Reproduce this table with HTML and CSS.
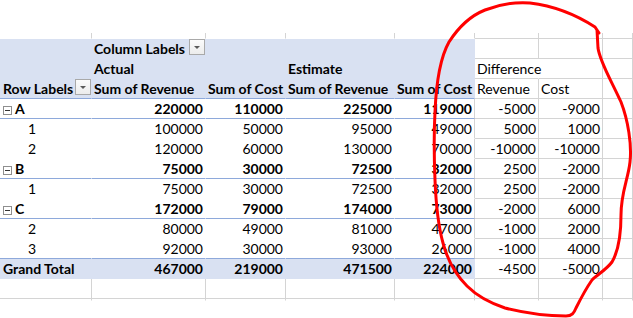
FILE: index.html
```html
<!DOCTYPE html>
<html>
<head>
<meta charset="utf-8">
<link rel="stylesheet" href="styles.css">
</head>
<body>
<div class="sheet">
  <div class="top-space"></div>
  <div class="row stub">
    <div class="c gv"></div><div class="c gv"></div><div class="c gv"></div><div class="c gv"></div><div class="c gv"></div><div class="c g"></div><div class="c g"></div><div class="c g"></div>
  </div>

  <div class="row">
    <div class="c h"></div>
    <div class="c h b btn-cell">Column Labels<span class="dd"></span></div>
    <div class="c h"></div><div class="c h"></div><div class="c h"></div>
    <div class="c g"></div><div class="c g"></div><div class="c g"></div>
  </div>
  <div class="row">
    <div class="c h"></div>
    <div class="c h b">Actual</div>
    <div class="c h"></div>
    <div class="c h b">Estimate</div>
    <div class="c h"></div>
    <div class="c g nr">Difference</div><div class="c g"></div><div class="c g"></div>
  </div>
  <div class="row">
    <div class="c h bl b btn-cell first">Row Labels<span class="dd"></span></div>
    <div class="c h bl b">Sum of Revenue</div>
    <div class="c h bl b">Sum of Cost</div>
    <div class="c h bl b">Sum of Revenue</div>
    <div class="c h bl b">Sum of Cost</div>
    <div class="c g">Revenue</div><div class="c g">Cost</div><div class="c g"></div>
  </div>

  <div class="row">
    <div class="c bl b first"><span class="tog"></span>A</div>
    <div class="c bl b n">220000</div><div class="c bl b n">110000</div><div class="c bl b n">225000</div><div class="c bl b n pe">119000</div>
    <div class="c g n">-5000</div><div class="c g n">-9000</div><div class="c g"></div>
  </div>
  <div class="row">
    <div class="c sub">1</div>
    <div class="c n">100000</div><div class="c n">50000</div><div class="c n">95000</div><div class="c n pe">49000</div>
    <div class="c g n">5000</div><div class="c g n">1000</div><div class="c g"></div>
  </div>
  <div class="row">
    <div class="c sub">2</div>
    <div class="c n">120000</div><div class="c n">60000</div><div class="c n">130000</div><div class="c n pe">70000</div>
    <div class="c g n">-10000</div><div class="c g n">-10000</div><div class="c g"></div>
  </div>
  <div class="row">
    <div class="c bl b first"><span class="tog"></span>B</div>
    <div class="c bl b n">75000</div><div class="c bl b n">30000</div><div class="c bl b n">72500</div><div class="c bl b n pe">32000</div>
    <div class="c g n">2500</div><div class="c g n">-2000</div><div class="c g"></div>
  </div>
  <div class="row">
    <div class="c sub">1</div>
    <div class="c n">75000</div><div class="c n">30000</div><div class="c n">72500</div><div class="c n pe">32000</div>
    <div class="c g n">2500</div><div class="c g n">-2000</div><div class="c g"></div>
  </div>
  <div class="row">
    <div class="c bl b first"><span class="tog"></span>C</div>
    <div class="c bl b n">172000</div><div class="c bl b n">79000</div><div class="c bl b n">174000</div><div class="c bl b n pe">73000</div>
    <div class="c g n">-2000</div><div class="c g n">6000</div><div class="c g"></div>
  </div>
  <div class="row">
    <div class="c sub">2</div>
    <div class="c n">80000</div><div class="c n">49000</div><div class="c n">81000</div><div class="c n pe">47000</div>
    <div class="c g n">-1000</div><div class="c g n">2000</div><div class="c g"></div>
  </div>
  <div class="row">
    <div class="c sub bl">3</div>
    <div class="c bl n">92000</div><div class="c bl n">30000</div><div class="c bl n">93000</div><div class="c bl n pe">26000</div>
    <div class="c g n">-1000</div><div class="c g n">4000</div><div class="c g"></div>
  </div>
  <div class="row">
    <div class="c h b first">Grand Total</div>
    <div class="c h b n">467000</div><div class="c h b n">219000</div><div class="c h b n">471500</div><div class="c h b n pe">224000</div>
    <div class="c g n">-4500</div><div class="c g n">-5000</div><div class="c g"></div>
  </div>
  <div class="row">
    <div class="c g"></div><div class="c g"></div><div class="c g"></div><div class="c g"></div><div class="c g"></div><div class="c g"></div><div class="c g"></div><div class="c g"></div>
  </div>
  <div class="row stub-bottom">
    <div class="c gv"></div><div class="c gv"></div><div class="c gv"></div><div class="c gv"></div><div class="c gv"></div><div class="c gv"></div><div class="c gv"></div><div class="c gv"></div>
  </div>
</div>

<svg class="ink" width="633" height="318" viewBox="0 0 633 318">
  <path d="M 435 112 C 436 88, 440 58, 449 42 C 458 28, 470 16, 485 10 C 500 4, 515 2, 530 3 C 555 6, 578 16, 595 27 L 599 33 L 597 30 L 598 48 C 600 62, 610 78, 621 102 C 628 120, 632 145, 630 162 C 628 180, 621 192, 621 215 C 621 235, 619 250, 612 262 C 606 270, 598 274, 592 280 C 585 290, 580 300, 576 308 C 574 313, 572 316, 566 316 C 545 316, 525 313, 505 308 C 490 303, 478 297, 467 286 C 456 275, 448 262, 443 243 C 438 225, 436 205, 435 180 C 434 155, 434 130, 435 112 Z" />
</svg>
</body>
</html>
```

FILE: styles.css
```css
html, body {
  margin: 0;
  padding: 0;
  background: #ffffff;
}

body {
  position: relative;
  width: 633px;
  height: 318px;
  overflow: hidden;
  font-family: Lato, "Noto Sans", sans-serif;
  font-size: 14px;
  color: #000000;
}

.top-space {
  height: 33px;
}

.row {
  display: grid;
  grid-template-columns: 92px 114px 80px 109px 80px 64px 64px 1fr;
  height: 20px;
}

.row.stub {
  height: 6px;
}

.row.stub-bottom {
  height: 2px;
}

.c {
  box-sizing: border-box;
  height: 100%;
  padding: 0 2px 0 2px;
  line-height: 19px;
  white-space: nowrap;
  border-right: 1px solid transparent;
  border-bottom: 1px solid transparent;
  position: relative;
}

.g {
  border-right-color: #d4d4d4;
  border-bottom-color: #d4d4d4;
}

.gv {
  border-right-color: #d4d4d4;
}

.nr {
  border-right-color: transparent;
  overflow: visible;
}

.h {
  background: #d9e1f2;
}

.bl {
  border-bottom-color: #8ea9db;
}

.pe {
  border-right-color: #d4d4d4;
}

.h.pe {
  border-right-color: #d9e1f2;
}

.b {
  font-weight: 700;
}

.n {
  text-align: right;
}

.first {
  padding-left: 3px;
}

.sub {
  padding-left: 28px;
}

.btn-cell {
  display: flex;
  justify-content: space-between;
  align-items: flex-start;
  padding-right: 0;
}

.dd {
  display: block;
  box-sizing: border-box;
  width: 16px;
  height: 16px;
  border: 1px solid #a9a9a9;
  background: linear-gradient(#fbfbfb, #ececec);
  position: relative;
}

.dd::after {
  content: "";
  position: absolute;
  left: 4px;
  top: 6px;
  border-left: 3px solid transparent;
  border-right: 3px solid transparent;
  border-top: 3px solid #5a5a5a;
}

.tog {
  display: inline-block;
  box-sizing: border-box;
  width: 9px;
  height: 9px;
  border: 1px solid #8f8f8f;
  background: #ffffff;
  margin-right: 3px;
  vertical-align: -1px;
  position: relative;
}

.tog::after {
  content: "";
  position: absolute;
  left: 1px;
  top: 3px;
  width: 5px;
  height: 1px;
  background: #333333;
}

.ink {
  position: absolute;
  left: 0;
  top: 0;
  pointer-events: none;
}

.ink path {
  fill: none;
  stroke: #ff0000;
  stroke-width: 3;
  stroke-linecap: round;
  stroke-linejoin: round;
}
```
